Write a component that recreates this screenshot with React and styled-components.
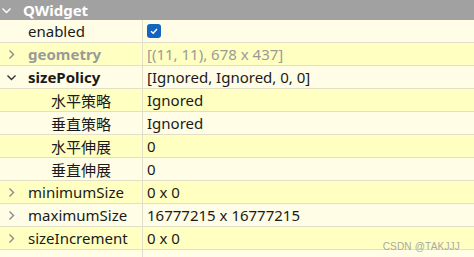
import React from "react";
import styled, { createGlobalStyle } from "styled-components";

const Global = createGlobalStyle`
  html, body { margin: 0; padding: 0; background: #fffde6; }
  body { font-family: "Noto Sans", "Noto Sans CJK SC", sans-serif; }
`;

const Panel = styled.div`
  width: 474px;
  height: 257px;
  overflow: hidden;
  position: relative;
  background: #fffde6;
`;

const Header = styled.div`
  height: 20px;
  background: #a1a1a1;
  display: flex;
  align-items: center;
  color: #fff;
  font-weight: 700;
  font-size: 15px;
`;

const Row = styled.div`
  display: grid;
  grid-template-columns: 143px 1fr;
  height: 22px;
  border-bottom: 1px solid #e2dfc8;
  background: ${(p) => (p.$alt ? "#ffffc2" : "#fffde6")};
  font-size: 15px;
  color: ${(p) => (p.$disabled ? "#9a9a9a" : "#1a1a1a")};
`;

const NameCell = styled.div`
  display: flex;
  align-items: center;
  border-right: 1px solid #e2dfc8;
  padding-left: ${(p) => (p.$sub ? "51px" : "5px")};
  font-weight: ${(p) => (p.$bold ? 700 : 400)};
  white-space: nowrap;
`;

const ValueCell = styled.div`
  display: flex;
  align-items: center;
  padding-left: 4px;
  white-space: nowrap;
`;

const Arrow = styled.span`
  width: 22px;
  display: inline-flex;
  align-items: center;
  justify-content: flex-start;
  padding-left: 1px;
`;

const Check = styled.span`
  width: 14px;
  height: 14px;
  border-radius: 3px;
  background: #1565c0;
  display: inline-flex;
  align-items: center;
  justify-content: center;
`;

const Watermark = styled.div`
  position: absolute;
  right: 14px;
  bottom: 5px;
  font-size: 10px;
  color: #a8a8a8;
  font-family: "Liberation Sans", sans-serif;
  letter-spacing: 0.2px;
`;

const Chevron = ({ down, color = "#8a8a8a" }) => (
  <svg width="11" height="11" viewBox="0 0 11 11">
    {down ? (
      <polyline points="1.5,3.5 5.5,7.5 9.5,3.5" fill="none" stroke={color} strokeWidth="1.4" />
    ) : (
      <polyline points="3.5,1.5 7.5,5.5 3.5,9.5" fill="none" stroke={color} strokeWidth="1.4" />
    )}
  </svg>
);

const rows = [
  { name: "enabled", value: "check", arrow: null },
  { name: "geometry", value: "[(11, 11), 678 x 437]", arrow: "right", bold: true, disabled: true },
  { name: "sizePolicy", value: "[Ignored, Ignored, 0, 0]", arrow: "down", bold: true },
  { name: "水平策略", value: "Ignored", sub: true },
  { name: "垂直策略", value: "Ignored", sub: true },
  { name: "水平伸展", value: "0", sub: true },
  { name: "垂直伸展", value: "0", sub: true },
  { name: "minimumSize", value: "0 x 0", arrow: "right" },
  { name: "maximumSize", value: "16777215 x 16777215", arrow: "right" },
  { name: "sizeIncrement", value: "0 x 0", arrow: "right" },
  { name: "", value: "" },
];

export default function App() {
  return (
    <Panel>
      <Global />
      <Header>
        <Arrow>
          <Chevron down color="#fff" />
        </Arrow>
        QWidget
      </Header>
      {rows.map((r, i) => (
        <Row key={i} $alt={i % 2 === 1} $disabled={r.disabled}>
          <NameCell $sub={r.sub} $bold={r.bold}>
            {!r.sub && (
              <Arrow>
                {r.arrow && (
                  <Chevron down={r.arrow === "down"} color={r.arrow === "down" ? "#333" : "#8a8a8a"} />
                )}
              </Arrow>
            )}
            {r.name}
          </NameCell>
          <ValueCell>
            {r.value === "check" ? (
              <Check>
                <svg width="10" height="10" viewBox="0 0 10 10">
                  <polyline points="2,5.2 4.2,7.2 8,3" fill="none" stroke="#fff" strokeWidth="1.4" />
                </svg>
              </Check>
            ) : (
              r.value
            )}
          </ValueCell>
        </Row>
      ))}
      <Watermark>CSDN @TAKJJJ</Watermark>
    </Panel>
  );
}
